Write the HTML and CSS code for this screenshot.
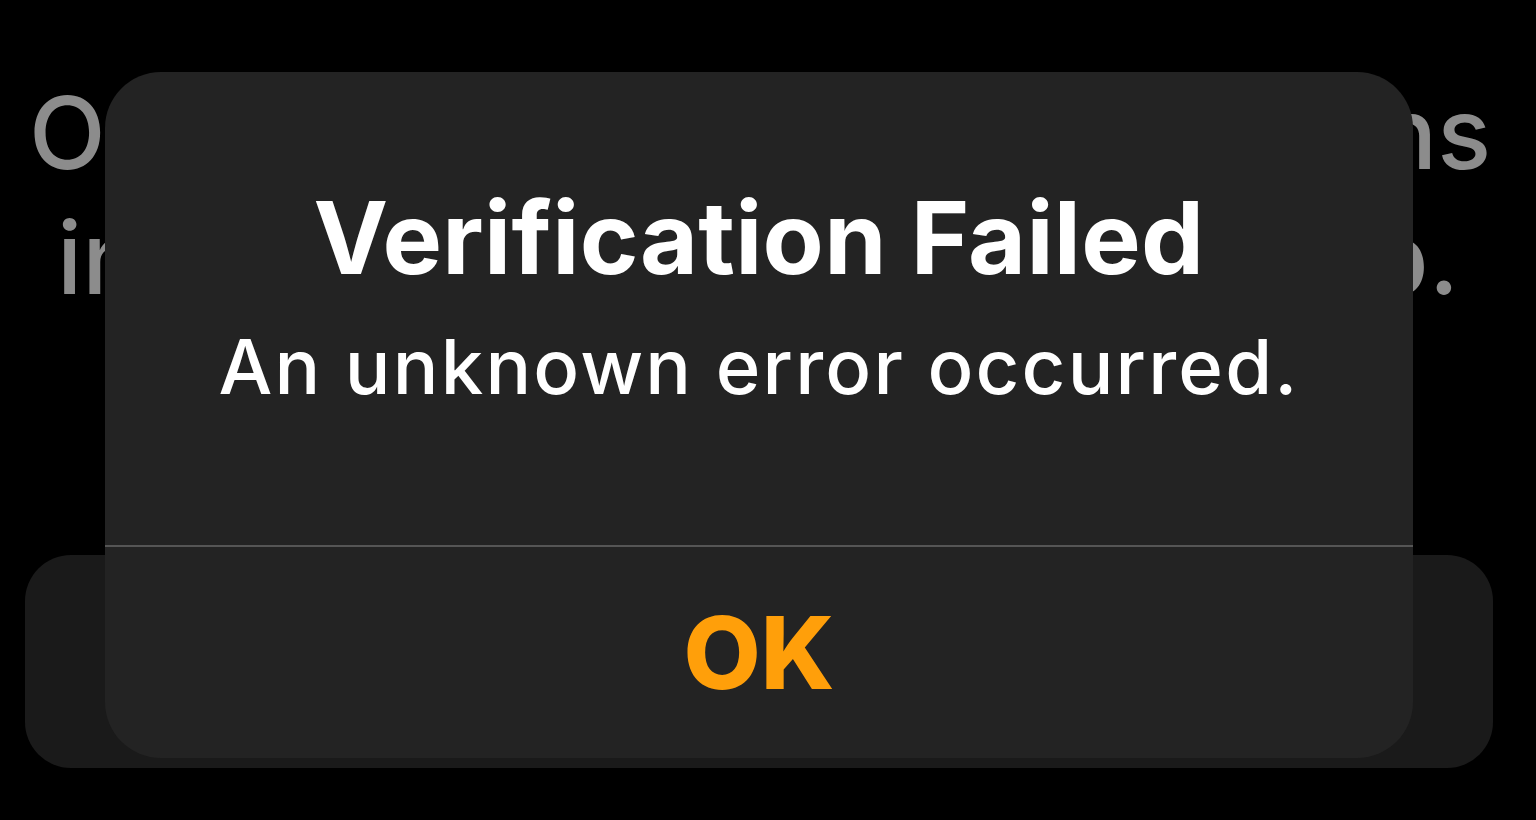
FILE: index.html
```html
<!DOCTYPE html>
<html lang="en">
<head>
    <meta charset="UTF-8">
    <meta name="viewport" content="width=device-width, initial-scale=1.0">
    <title>Verification Failed</title>
    <link rel="stylesheet" href="styles.css">
</head>
<body>

    <div class="screen">
        <div class="info">
            <div class="info-line">
                <span>Only</span>
                <span>options</span>
            </div>
            <div class="info-line second">
                <span>in</span>
                <span>app.</span>
            </div>
        </div>
        <div class="panel"></div>

        <div class="alert">
            <div class="alert-body">
                <h1 class="alert-title">Verification Failed</h1>
                <p class="alert-message">An unknown error occurred.</p>
            </div>
            <button class="alert-button">OK</button>
        </div>
    </div>

</body>
</html>
```

FILE: styles.css
```css
body {
    margin: 0;
    padding: 0;
    background: #000;
    font-family: Inter, "Noto Sans", sans-serif;
    overflow: hidden;
}

.screen {
    position: relative;
    width: 1536px;
    height: 820px;
}

.info {
    padding: 70px 45px 0 29px;
    color: #8c8c8c;
    font-size: 100px;
    font-weight: 500;
    line-height: 125px;
    height: 413px;
}

.info-line {
    display: flex;
    justify-content: space-between;
}

.info-line.second {
    padding: 0 32px 0 28px;
}

.panel {
    margin: 72px 43px 0 25px;
    height: 213px;
    background: #1a1a1a;
    border-radius: 46px;
}

.alert {
    position: absolute;
    left: 105px;
    top: 72px;
    width: 1308px;
    height: 686px;
    background: #232323;
    border-radius: 56px;
    display: flex;
    flex-direction: column;
    overflow: hidden;
}

.alert-body {
    flex: 1;
    text-align: center;
    color: #fff;
    padding-top: 106px;
    border-bottom: 2px solid #555;
}

.alert-title {
    margin: 0;
    font-size: 100px;
    font-weight: 700;
    line-height: 120px;
    letter-spacing: 0.3px;
}

.alert-message {
    margin: 18px 0 0;
    font-size: 76px;
    font-weight: 500;
    line-height: 100px;
    letter-spacing: 2.2px;
}

.alert-button {
    height: 211px;
    border: none;
    background: transparent;
    color: #ff9f0a;
    font-family: Inter, "Noto Sans", sans-serif;
    font-size: 100px;
    font-weight: 800;
    padding: 0;
}
```
